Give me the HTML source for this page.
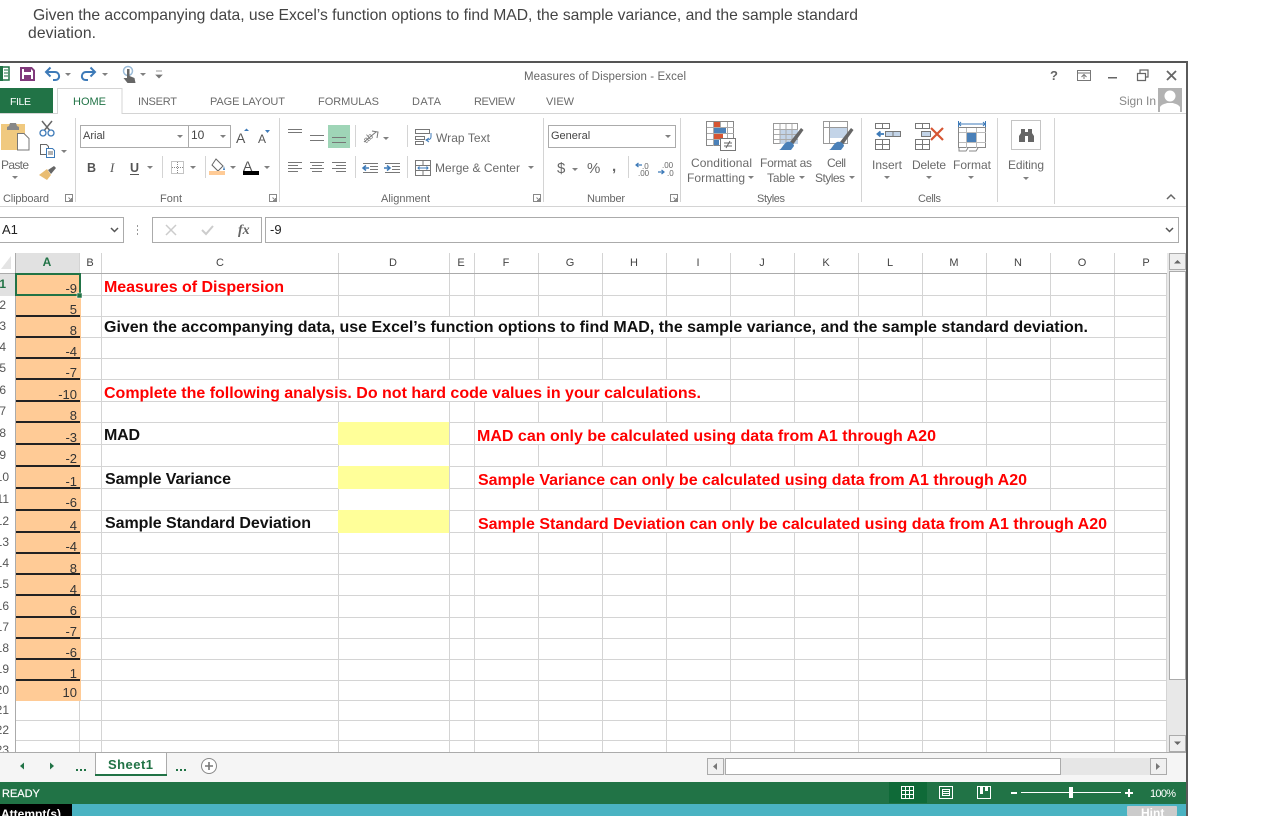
<!DOCTYPE html>
<html><head><meta charset="utf-8"><title>Measures of Dispersion - Excel</title>
<style>
html,body{margin:0;padding:0;background:#fff;width:1277px;height:823px;overflow:hidden}
svg{display:block;font-family:"Liberation Sans",sans-serif}
.u{font-size:11.500px;fill:#666}
.t{font-size:12px;fill:#6a6a6a}
.b{font-size:11px;fill:#6a6a6a}
.g{font-size:11px;fill:#666}
.r{font-size:16px;font-weight:bold;fill:#f00}
.k{font-size:16px;font-weight:bold;fill:#111}
.n{font-size:13px;fill:#333;text-anchor:end}
.h{font-size:11px;fill:#444;text-anchor:middle}
.w{font-size:12px;fill:#555;text-anchor:end}
</style></head><body>
<svg width="1277" height="823" viewBox="0 0 1277 823" xmlns="http://www.w3.org/2000/svg">
<defs>
<path id="d" d="M0 0h6l-3 3z" fill="#808080"/>
<path id="l" d="M0 0h7v7h-7zM3 3l3 3M6 3.500V6H3.500" fill="none" stroke="#888" stroke-width="1"/>
</defs>
<rect width="1277" height="823" fill="#fff"/>
<text x="33" y="20" font-size="15.700" fill="#444" textLength="825">Given the accompanying data, use Excel’s function options to find MAD, the sample variance, and the sample standard</text>
<text x="28" y="38" font-size="15.700" fill="#444" textLength="68">deviation.</text>

<!-- window frame -->
<rect x="0" y="61" width="1188" height="2" fill="#555"/>
<rect x="1186" y="61" width="2" height="755" fill="#5a5a5a"/>

<!-- QAT -->
<rect x="0" y="67" width="9" height="13" fill="#fff" stroke="#217346" stroke-width="1.500"/>
<rect x="0" y="66" width="3" height="15" fill="#217346"/>
<path d="M4 70h4M4 73h4M4 76h4" stroke="#217346"/>
<path d="M21 68h10.500l2.500 2.500V80H21z" fill="#fff" stroke="#80397b" stroke-width="2"/>
<rect x="24" y="68" width="7" height="4" fill="#80397b"/><rect x="24" y="75" width="7" height="5" fill="#80397b"/>
<path d="M46 72h9c5 0 6 8 0 8h-2M50.500 67.500L46 72l4.500 4.500" fill="none" stroke="#3d7ab8" stroke-width="2"/>
<use href="#d" x="65" y="73"/>
<path d="M95 72h-9c-5 0-6 8 0 8h2M90.500 67.500L95 72l-4.500 4.500" fill="none" stroke="#3d7ab8" stroke-width="2"/>
<use href="#d" x="102" y="73"/>
<circle cx="128" cy="71" r="4.500" fill="none" stroke="#9cbcd8" stroke-width="1.500"/>
<path d="M127 69h2.500v7l5 2 1 5h-8l-4-5h3.500z" fill="#666"/>
<use href="#d" x="140" y="73"/>
<path d="M156 71h6M156 75h6l-3 3z" fill="#777" stroke="#777" stroke-width=".7"/>

<text x="524" y="80" class="u" textLength="162">Measures of Dispersion - Excel</text>
<text x="1050" y="80" font-size="13" font-weight="bold" fill="#666">?</text>
<path d="M1077.500 70.500h13v10h-13zM1078 73h12M1084 79v-4M1081.500 77l2.500-2.500 2.500 2.500" fill="none" stroke="#777"/>
<rect x="1108" y="77" width="9" height="1.500" fill="#666"/>
<path d="M1137.500 73.500h8v7h-8zM1140 73v-3h8v7h-2" fill="none" stroke="#666" stroke-width="1.200"/>
<path d="M1167 71l9 9M1176 71l-9 9" stroke="#666" stroke-width="1.800"/>

<!-- tabs -->
<rect x="0" y="113" width="1186" height="1" fill="#d4d4d4"/>
<rect x="0" y="88" width="53" height="25" fill="#217346"/>
<text x="10" y="105" font-size="10.500" fill="#fff" textLength="21">FILE</text>
<path d="M57.500 114V88.500h64.500V114" fill="#fff" stroke="#d4d4d4"/>
<text x="73" y="105" font-size="11" fill="#217346" textLength="33">HOME</text>
<text x="138" y="105" class="b" textLength="39">INSERT</text>
<text x="210" y="105" class="b" textLength="75">PAGE LAYOUT</text>
<text x="318" y="105" class="b" textLength="61">FORMULAS</text>
<text x="412" y="105" class="b" textLength="29">DATA</text>
<text x="474" y="105" class="b" textLength="41">REVIEW</text>
<text x="546" y="105" class="b" textLength="28">VIEW</text>
<text x="1119" y="105" font-size="12" fill="#888" textLength="37">Sign In</text>
<rect x="1158" y="88" width="24" height="24" fill="#b2b2b2"/>
<circle cx="1170" cy="96" r="5.500" fill="#fff"/>
<path d="M1160 112v-5c2-3 5-3 7-4h6c2 1 5 1 7 4v5z" fill="#fff"/>

<!-- ribbon separators -->
<g fill="#d4d4d4">
<rect x="75" y="118" width="1" height="84"/><rect x="279" y="118" width="1" height="84"/>
<rect x="543" y="118" width="1" height="84"/><rect x="680" y="118" width="1" height="84"/>
<rect x="861" y="118" width="1" height="84"/><rect x="997" y="118" width="1" height="84"/>
<rect x="1054" y="118" width="1" height="86"/>
<rect x="355" y="125" width="1" height="22"/><rect x="407" y="125" width="1" height="22"/>
<rect x="355" y="156" width="1" height="22"/><rect x="407" y="156" width="1" height="22"/>
<rect x="162" y="156" width="1" height="22"/><rect x="205" y="156" width="1" height="22"/>
<rect x="628" y="156" width="1" height="22"/>
<rect x="0" y="206" width="1186" height="1"/>
</g>

<!-- clipboard -->
<rect x="1" y="124" width="24" height="26" fill="#f0c97f"/>
<path d="M7 127l2-1 1-3h6l1 3 2 1v3H7z" fill="#888"/>
<path d="M17.500 133.500h6.500l5 5v11.500h-11.500z" fill="#fff" stroke="#777"/>
<text x="1" y="169" class="t" textLength="28">Paste</text><use href="#d" x="12" y="176"/>
<path d="M42 121l9 11M52 121l-9 11" stroke="#666" stroke-width="1.500"/>
<circle cx="43" cy="133" r="3" fill="#fff" stroke="#3d7ab8" stroke-width="1.300"/><circle cx="51" cy="133" r="3" fill="#fff" stroke="#3d7ab8" stroke-width="1.300"/>
<path d="M40.500 144.500h6l2 2v8h-8z" fill="#fff" stroke="#666"/><path d="M46.500 148.500h6l2 2v7h-8z" fill="#fff" stroke="#3d7ab8"/><path d="M48 152h5M48 154h5" stroke="#666"/>
<use href="#d" x="61" y="150"/>
<path d="M39 175l8-6 4 6-4 5z" fill="#e9bd72"/><path d="M48 170l6-4 2 2-5 6z" fill="#666"/>
<text x="3" y="202" class="g" textLength="46">Clipboard</text>
<use href="#l" x="65.500" y="194.500"/>

<!-- font -->
<rect x="80.500" y="125.500" width="108" height="22" fill="#fff" stroke="#ababab"/>
<rect x="188.500" y="125.500" width="42" height="22" fill="#fff" stroke="#ababab"/>
<text x="83" y="139" font-size="11" fill="#444">Arial</text>
<text x="191" y="139" font-size="12" fill="#444">10</text>
<use href="#d" x="177" y="135"/><use href="#d" x="220" y="135"/>
<text x="236" y="143" font-size="14" fill="#555">A</text><path d="M244 131l2.500-2.500 2.500 2.500z" fill="#3d7ab8"/>
<text x="258" y="143" font-size="12" fill="#555">A</text><path d="M265 130h5l-2.500 3z" fill="#3d7ab8"/>
<text x="87" y="172" font-size="12.500" font-weight="bold" fill="#555">B</text>
<text x="110" y="172" font-size="13" font-style="italic" font-family="Liberation Serif" fill="#555">I</text>
<text x="130" y="172" font-size="12.500" font-weight="bold" fill="#555">U</text><rect x="130" y="174" width="9" height="1" fill="#555"/>
<use href="#d" x="147" y="166"/>
<rect x="171.500" y="161.500" width="12" height="12" fill="none" stroke="#888" stroke-dasharray="1 1"/><path d="M177.500 162v12M172 167.500h12" stroke="#888" stroke-dasharray="1 1"/>
<use href="#d" x="190" y="166"/>
<path d="M216 159l7 7-5 5-6-6z" fill="#fff" stroke="#666"/><path d="M224 166l1 4-2 0z" fill="#3d7ab8"/>
<rect x="209" y="171" width="16" height="4" fill="#ffcb96"/>
<use href="#d" x="230" y="166"/>
<text x="243" y="171" font-size="14" fill="#555" textLength="16">A</text>
<rect x="243" y="171" width="16" height="4" fill="#000"/>
<use href="#d" x="264" y="166"/>
<text x="160" y="202" class="g" textLength="22">Font</text>
<use href="#l" x="269.500" y="194.500"/>

<!-- alignment -->
<rect x="328" y="125" width="22" height="23" fill="#9fd5b7"/>
<path d="M288 129.500h14M288 132.500h14M310 135.500h14M310 140.500h14M332 137.500h14M332 142.500h14M288 162.500h14M288 165.500h10M288 168.500h14M288 171.500h10M310 162.500h14M312 165.500h10M310 168.500h14M312 171.500h10M332 162.500h14M336 165.500h10M332 168.500h14M336 171.500h10" stroke="#777" fill="none"/>
<path d="M364 142l12-10M372 131l6 1-1 6" fill="none" stroke="#777"/><text x="363" y="141" font-size="9" fill="#777" transform="rotate(-40 368 138)">ab</text>
<use href="#d" x="383" y="137"/>
<path d="M370 166.500h8M370 169.500h8M363 163.500h15M363 172.500h15" stroke="#777"/><path d="M369 168h-6M366 165.500l-3 2.500 3 2.500" fill="none" stroke="#3d7ab8" stroke-width="1.500"/>
<path d="M392 166.500h8M392 169.500h8M385 163.500h15M385 172.500h15" stroke="#777"/><path d="M384 168h6M387 165.500l3 2.500-3 2.500" fill="none" stroke="#3d7ab8" stroke-width="1.500"/>
<path d="M415.500 129.500h14v4h-14zM415.500 136.500h9v3h-9zM415.500 141.500h8v3h-8z" fill="none" stroke="#777"/><path d="M431 133v4c0 2-2 3-4 3M429 138l-3 2 3 2" fill="none" stroke="#3d7ab8"/>
<text x="436" y="142" class="t" textLength="54">Wrap Text</text>
<rect x="415.500" y="160.500" width="15" height="15" fill="none" stroke="#777"/><path d="M416 165.500h14M416 170.500h14M423 161v4M423 171v4" stroke="#777"/><path d="M418 168h10M419.500 166.500l-1.500 1.500 1.500 1.500M426.500 166.500l1.500 1.500-1.500 1.500" fill="none" stroke="#3d7ab8"/>
<text x="435" y="172" class="t" textLength="85">Merge &amp; Center</text>
<use href="#d" x="528" y="166"/>
<text x="381" y="202" class="g" textLength="49">Alignment</text>
<use href="#l" x="533.500" y="194.500"/>

<!-- number -->
<rect x="548.500" y="125.500" width="127" height="22" fill="#fff" stroke="#ababab"/>
<text x="551" y="139" font-size="11" fill="#444">General</text>
<use href="#d" x="665" y="135"/>
<text x="557" y="173" font-size="15" fill="#666">$</text><use href="#d" x="572" y="168"/>
<text x="587" y="173" font-size="15" fill="#666">%</text>
<text x="612" y="171" font-size="15" font-weight="bold" fill="#666">,</text>
<text x="642" y="169" font-size="8" fill="#666">.0</text><text x="638" y="176" font-size="8" fill="#666">.00</text>
<path d="M642 165h-6M638.500 163l-2.500 2 2.500 2" fill="none" stroke="#3d7ab8" stroke-width="1.200"/>
<text x="662" y="168" font-size="8" fill="#666">.00</text><text x="667" y="176" font-size="8" fill="#666">.0</text>
<path d="M658 172h6M661.500 170l2.500 2-2.500 2" fill="none" stroke="#3d7ab8" stroke-width="1.200"/>
<text x="587" y="202" class="g" textLength="38">Number</text>
<use href="#l" x="670.500" y="194.500"/>

<!-- styles -->
<g>
<rect x="706.500" y="121.500" width="27" height="24" fill="#fff" stroke="#888"/>
<path d="M707 127.500h27M707 133.500h27M707 139.500h27M713.500 122v24M720.500 122v24M727.500 122v24" stroke="#aaa"/>
<rect x="714" y="122" width="6" height="5" fill="#d65532"/><rect x="714" y="128" width="12" height="5" fill="#4a80b8"/><rect x="714" y="134" width="9" height="5" fill="#d65532"/><rect x="714" y="140" width="5" height="5" fill="#4a80b8"/>
<rect x="720.500" y="138.500" width="15" height="12" fill="#fff" stroke="#777"/>
<path d="M724 143h8M724 146h8M730 141l-4 7" stroke="#666" fill="none"/>
</g>
<text x="691" y="167" class="t" textLength="61">Conditional</text>
<text x="687" y="182" class="t" textLength="58">Formatting</text><use href="#d" x="748" y="176"/>
<g>
<rect x="773.500" y="123.500" width="24" height="20" fill="#fff" stroke="#999"/>
<rect x="780" y="129" width="18" height="15" fill="#c3d4e8"/>
<path d="M774 129.500h24M774 134.500h24M774 139.500h24M780 124v20M786 124v20M792 124v20" stroke="#aaa"/>
<path d="M790 142l11-14 2.500 2-10 14z" fill="#666"/>
<path d="M779 150c3-1 4-6 8-8 4-1 7 2 7 4l-3 4z" fill="#4a80b8"/>
</g>
<text x="760" y="167" class="t" textLength="52">Format as</text>
<text x="767" y="182" class="t" textLength="28">Table</text><use href="#d" x="799" y="176"/>
<g>
<rect x="823.500" y="121.500" width="24" height="22" fill="#fff" stroke="#999"/>
<rect x="829" y="127" width="18" height="11" fill="#c3d4e8"/>
<path d="M824 127.500h24M829.500 122v22" stroke="#999"/>
<path d="M840 142l11-14 2.500 2-10 14z" fill="#666"/>
<path d="M829 150c3-1 4-6 8-8 4-1 7 2 7 4l-3 4z" fill="#4a80b8"/>
</g>
<text x="827" y="167" class="t" textLength="19">Cell</text>
<text x="815" y="182" class="t" textLength="30">Styles</text><use href="#d" x="849" y="176"/>
<text x="757" y="202" class="g" textLength="28">Styles</text>

<!-- cells -->
<path d="M875.500 123.500h14v5h-14zM882.500 124v4M875.500 139.500h14v10h-14zM875.500 144.500h14M882.500 140v10" fill="none" stroke="#777"/>
<rect x="885.500" y="131.500" width="15" height="5" fill="#c3d4e8" stroke="#777"/><path d="M893 132v4" stroke="#777"/>
<path d="M884 134h-6M880.500 131.500l-3 2.500 3 2.500" fill="none" stroke="#3d7ab8" stroke-width="1.800"/>
<text x="872" y="169" class="t" textLength="30">Insert</text><use href="#d" x="884" y="176"/>
<path d="M915.500 123.500h14v5h-14zM922.500 124v4M915.500 139.500h14v10h-14zM915.500 144.500h14M922.500 140v10" fill="none" stroke="#777"/>
<rect x="921.500" y="131.500" width="9" height="5" fill="#c3d4e8" stroke="#777"/>
<path d="M931 128l12 12M943 128l-12 12" stroke="#d65532" stroke-width="2.200"/>
<text x="912" y="169" class="t" textLength="34">Delete</text><use href="#d" x="926" y="176"/>
<path d="M958 124h27" stroke="#3d7ab8"/><path d="M958.500 121v6M985.500 121v6M961 122l-2 2 2 2M983 122l2 2-2 2" fill="none" stroke="#3d7ab8"/>
<rect x="958.500" y="127.500" width="27" height="20" fill="#fff" stroke="#888"/>
<path d="M959 132.500h27M959 142.500h27M966.500 128v20M976.500 128v20" stroke="#bbb"/>
<rect x="967" y="133" width="9" height="9" fill="#4a80b8"/>
<path d="M959 148v3h7l2-3M969 151h7l2-3" fill="none" stroke="#888"/>
<text x="953" y="169" class="t" textLength="38">Format</text><use href="#d" x="968" y="176"/>
<text x="918" y="202" class="g" textLength="23">Cells</text>
<rect x="1011.500" y="120.500" width="29" height="29" fill="#fff" stroke="#c4c4c4"/>
<path d="M1019 142v-6l2-3v-4h4v13zM1026 133h1v3h-1zM1028 129h4v4l2 3v6h-6zM1025 132h3v4h-3z" fill="#666"/>
<text x="1008" y="169" class="t" textLength="36">Editing</text><use href="#d" x="1023" y="177"/>
<path d="M1167 199l4-4 4 4" fill="none" stroke="#666" stroke-width="1.500"/>

<!-- formula bar -->
<rect x="-1" y="217.500" width="124.500" height="25" fill="#fff" stroke="#ababab"/>
<text x="2" y="234" font-size="13" fill="#222">A1</text>
<path d="M111 228l3.500 3.500 3.500-3.500" fill="none" stroke="#555" stroke-width="1.500"/>
<path d="M137 226h1M137 230h1M137 234h1" stroke="#999" stroke-width="2"/>
<rect x="152.500" y="217.500" width="109" height="25" fill="#fff" stroke="#ababab"/>
<rect x="265.500" y="217.500" width="913" height="25" fill="#fff" stroke="#ababab"/>
<path d="M166 225l10 10M176 225l-10 10" stroke="#ccc" stroke-width="1.500"/>
<path d="M202 230l4 4 7-8" fill="none" stroke="#ccc" stroke-width="2"/>
<text x="238" y="234" font-size="14" font-weight="bold" font-style="italic" font-family="Liberation Serif" fill="#666">fx</text>
<text x="270" y="234" font-size="13" fill="#222">-9</text>
<path d="M1166 228l3.500 3.500 3.500-3.500" fill="none" stroke="#555" stroke-width="1.500"/>

<!-- column header -->
<rect x="15" y="253" width="65" height="20" fill="#e1e1e1"/>
<path d="M11 256v13h-10z" fill="#e4e4e4"/>
<path d="M79.500 253v20M101.500 253v20M338.500 253v20M449.500 253v20M474.500 253v20M538.500 253v20M602.500 253v20M666.500 253v20M730.500 253v20M794.500 253v20M858.500 253v20M922.500 253v20M986.500 253v20M1050.500 253v20M1114.500 253v20" stroke="#d4d4d4"/>
<rect x="0" y="273" width="1167" height="1" fill="#ababab"/>
<text x="47" y="266" class="h" font-weight="bold" style="fill:#217346;font-size:12px">A</text>
<text x="90" y="266" class="h">B</text><text x="220" y="266" class="h">C</text><text x="393" y="266" class="h">D</text><text x="461" y="266" class="h">E</text><text x="506" y="266" class="h">F</text><text x="570" y="266" class="h">G</text><text x="634" y="266" class="h">H</text><text x="698" y="266" class="h">I</text><text x="762" y="266" class="h">J</text><text x="826" y="266" class="h">K</text><text x="890" y="266" class="h">L</text><text x="954" y="266" class="h">M</text><text x="1018" y="266" class="h">N</text><text x="1082" y="266" class="h">O</text><text x="1146" y="266" class="h">P</text>

<!-- gridlines -->
<g fill="#d4d4d4">
<rect x="16" y="295" width="1151" height="1"/><rect x="16" y="316" width="1151" height="1"/><rect x="16" y="337" width="1151" height="1"/><rect x="16" y="358" width="1151" height="1"/><rect x="16" y="379" width="1151" height="1"/><rect x="16" y="401" width="1151" height="1"/><rect x="16" y="422" width="1151" height="1"/><rect x="16" y="444" width="1151" height="1"/><rect x="16" y="466" width="1151" height="1"/><rect x="16" y="488" width="1151" height="1"/><rect x="16" y="510" width="1151" height="1"/><rect x="16" y="532" width="1151" height="1"/><rect x="16" y="553" width="1151" height="1"/><rect x="16" y="574" width="1151" height="1"/><rect x="16" y="595" width="1151" height="1"/><rect x="16" y="617" width="1151" height="1"/><rect x="16" y="638" width="1151" height="1"/><rect x="16" y="659" width="1151" height="1"/><rect x="16" y="680" width="1151" height="1"/><rect x="16" y="700" width="1151" height="1"/><rect x="16" y="720" width="1151" height="1"/><rect x="16" y="740" width="1151" height="1"/>
<rect x="79" y="274" width="1" height="478"/><rect x="101" y="274" width="1" height="478"/><rect x="338" y="274" width="1" height="478"/><rect x="449" y="274" width="1" height="478"/><rect x="474" y="274" width="1" height="478"/><rect x="538" y="274" width="1" height="478"/><rect x="602" y="274" width="1" height="478"/><rect x="666" y="274" width="1" height="478"/><rect x="730" y="274" width="1" height="478"/><rect x="794" y="274" width="1" height="478"/><rect x="858" y="274" width="1" height="478"/><rect x="922" y="274" width="1" height="478"/><rect x="986" y="274" width="1" height="478"/><rect x="1050" y="274" width="1" height="478"/><rect x="1114" y="274" width="1" height="478"/><rect x="1166" y="274" width="1" height="478"/>
</g>
<rect x="15" y="253" width="1" height="499" fill="#ababab"/>
<!-- overflow masks -->
<g fill="#fff">
<rect x="102" y="317" width="1012" height="20"/>
<rect x="102" y="380" width="628" height="21"/>
<rect x="475" y="423" width="511" height="21"/>
<rect x="475" y="467" width="575" height="21"/>
<rect x="475" y="511" width="639" height="21"/>
</g>
<g fill="#ffff99"><rect x="338" y="422" width="111" height="23"/><rect x="338" y="466" width="111" height="23"/><rect x="338" y="510" width="111" height="23"/></g>

<!-- col A -->
<rect x="16" y="274" width="65" height="427" fill="#ffcb96"/>
<g fill="#222">
<rect x="16" y="315" width="64" height="2"/><rect x="16" y="336" width="64" height="2"/><rect x="16" y="357" width="64" height="2"/><rect x="16" y="378" width="64" height="2"/><rect x="16" y="400" width="64" height="2"/><rect x="16" y="421" width="64" height="2"/><rect x="16" y="443" width="64" height="2"/><rect x="16" y="465" width="64" height="2"/><rect x="16" y="487" width="64" height="2"/><rect x="16" y="509" width="64" height="2"/><rect x="16" y="531" width="64" height="2"/><rect x="16" y="552" width="64" height="2"/><rect x="16" y="573" width="64" height="2"/><rect x="16" y="594" width="64" height="2"/><rect x="16" y="616" width="64" height="2"/><rect x="16" y="637" width="64" height="2"/><rect x="16" y="658" width="64" height="2"/><rect x="16" y="679" width="64" height="2"/>
</g>
<rect x="16" y="274" width="64" height="21" fill="none" stroke="#217346" stroke-width="2"/>
<rect x="77" y="293" width="5" height="5" fill="#217346" stroke="#fff" stroke-width=".5"/>
<text x="77" y="293" class="n">-9</text><text x="77" y="314" class="n">5</text><text x="77" y="335" class="n">8</text><text x="77" y="356" class="n">-4</text><text x="77" y="377" class="n">-7</text><text x="77" y="399" class="n">-10</text><text x="77" y="420" class="n">8</text><text x="77" y="442" class="n">-3</text><text x="77" y="463" class="n">-2</text><text x="77" y="486" class="n">-1</text><text x="77" y="507" class="n">-6</text><text x="77" y="530" class="n">4</text><text x="77" y="551" class="n">-4</text><text x="77" y="573" class="n">8</text><text x="77" y="594" class="n">4</text><text x="77" y="615" class="n">6</text><text x="77" y="636" class="n">-7</text><text x="77" y="657" class="n">-6</text><text x="77" y="678" class="n">1</text><text x="77" y="697" class="n">10</text>

<!-- row headers -->
<rect x="0" y="274" width="15" height="22" fill="#e1e1e1"/>
<text x="6" y="288" class="w" font-weight="bold" style="fill:#217346">1</text>
<text x="6" y="309" class="w">2</text><text x="6" y="330" class="w">3</text><text x="6" y="351" class="w">4</text><text x="6" y="372" class="w">5</text><text x="6" y="394" class="w">6</text><text x="6" y="415" class="w">7</text><text x="6" y="437" class="w">8</text><text x="6" y="459" class="w">9</text>
<text x="9" y="481" class="w">10</text><text x="9" y="503" class="w">11</text><text x="9" y="525" class="w">12</text><text x="9" y="546" class="w">13</text><text x="9" y="567" class="w">14</text><text x="9" y="588" class="w">15</text><text x="9" y="610" class="w">16</text><text x="9" y="631" class="w">17</text><text x="9" y="652" class="w">18</text><text x="9" y="673" class="w">19</text><text x="9" y="694" class="w">20</text><text x="9" y="714" class="w">21</text><text x="9" y="734" class="w">22</text><text x="9" y="754" class="w">23</text>

<!-- sheet text -->
<text x="104" y="292" class="r" textLength="180">Measures of Dispersion</text>
<text x="104" y="332" class="k" textLength="984">Given the accompanying data, use Excel’s function options to find MAD, the sample variance, and the sample standard deviation.</text>
<text x="104" y="398" class="r" textLength="597">Complete the following analysis. Do not hard code values in your calculations.</text>
<text x="104" y="440" class="k" textLength="36">MAD</text>
<text x="105" y="484" class="k" textLength="126">Sample Variance</text>
<text x="105" y="528" class="k" textLength="206">Sample Standard Deviation</text>
<text x="477" y="441" class="r" textLength="459">MAD can only be calculated using data from A1 through A20</text>
<text x="478" y="485" class="r" textLength="549">Sample Variance can only be calculated using data from A1 through A20</text>
<text x="478" y="529" class="r" textLength="629">Sample Standard Deviation can only be calculated using data from A1 through A20</text>

<!-- vertical scrollbar -->
<rect x="1167" y="253" width="19" height="499" fill="#e8e8e8"/>
<rect x="1169.500" y="253.500" width="16" height="16" fill="#eee" stroke="#ababab"/>
<path d="M1174 263.500l3.500-3.500 3.500 3.500z" fill="#666"/>
<rect x="1169.500" y="271.500" width="16" height="408" fill="#fff" stroke="#ababab"/>
<rect x="1169.500" y="735.500" width="16" height="16" fill="#eee" stroke="#ababab"/>
<path d="M1174 741.500h7l-3.500 3.500z" fill="#666"/>

<!-- sheet bar -->
<rect x="0" y="752" width="1186" height="30" fill="#f5f5f5"/>
<rect x="0" y="752" width="1186" height="1" fill="#ababab"/>
<path d="M20 766l4-3.500v7z" fill="#217346"/><path d="M54 766l-4-3.500v7z" fill="#217346"/>
<path d="M76 769h2v2h-2zM80 769h2v2h-2zM84 769h2v2h-2zM176 769h2v2h-2zM180 769h2v2h-2zM184 769h2v2h-2z" fill="#217346"/>
<path d="M95.500 775V752.500h71V775" fill="#fff" stroke="#ababab"/>
<rect x="96" y="753" width="70" height="22" fill="#fff"/>
<rect x="95" y="774" width="72" height="2" fill="#217346"/>
<text x="108" y="769" font-size="13" font-weight="bold" fill="#217346" textLength="45">Sheet1</text>
<circle cx="209" cy="766" r="7.500" fill="#fff" stroke="#888"/><path d="M205 766h8M209 762v8" stroke="#777" stroke-width="1.600"/>
<rect x="707" y="758" width="460" height="17" fill="#e6e6e6"/>
<rect x="707.500" y="758.500" width="16" height="16" fill="#f0f0f0" stroke="#ababab"/><path d="M713 766.500l4-3.500v7z" fill="#777"/>
<rect x="725.500" y="758.500" width="335" height="16" fill="#fff" stroke="#ababab"/>
<rect x="1150.500" y="758.500" width="16" height="16" fill="#f0f0f0" stroke="#ababab"/><path d="M1160 766.500l-4-3.500v7z" fill="#777"/>

<!-- status -->
<rect x="0" y="782" width="1186" height="22" fill="#217346"/>
<text x="2" y="797" font-size="11" fill="#fff" stroke="#fff" stroke-width=".2">READY</text>
<rect x="889" y="782" width="38" height="21" fill="#0f6a38"/>
<path d="M901.500 786.500h12v12h-12zM901.500 790.500h12M901.500 794.500h12M905.500 786.500v12M909.500 786.500v12" fill="none" stroke="#fff"/>
<path d="M939.500 786.500h13v12h-13zM942.500 789.500h7v6h-7zM943 791.500h6M943 793.500h6" fill="none" stroke="#fff"/>
<path d="M977.500 786.500h13v12h-13z" fill="none" stroke="#fff"/><path d="M980 787h3v7h-3zM985 787h3v4h-3z" fill="#fff"/>
<rect x="1011" y="792" width="6" height="2" fill="#fff"/>
<rect x="1021" y="792" width="100" height="1" fill="#fff"/>
<rect x="1069" y="787" width="4" height="11" fill="#fff"/>
<path d="M1125 793h8M1129 789v8" stroke="#fff" stroke-width="2"/>
<text x="1150" y="797" font-size="11" fill="#fff" textLength="26">100%</text>

<!-- bottom teal -->
<rect x="0" y="804" width="1186" height="12" fill="#4ab3c2"/>
<rect x="1186" y="804" width="2" height="12" fill="#5a5a5a"/>
<rect x="0" y="804" width="72" height="12" fill="#000"/>
<svg x="0" y="804" width="72" height="12"><text x="1" y="14" font-size="12" font-weight="bold" fill="#fff">Attempt(s)</text></svg>
<rect x="1127" y="806" width="50" height="10" rx="1" fill="#cbcbcb"/>
<svg x="1127" y="806" width="50" height="10"><text x="14" y="11" font-size="12" font-weight="bold" fill="#fff">Hint</text></svg>
</svg>
</body></html>
